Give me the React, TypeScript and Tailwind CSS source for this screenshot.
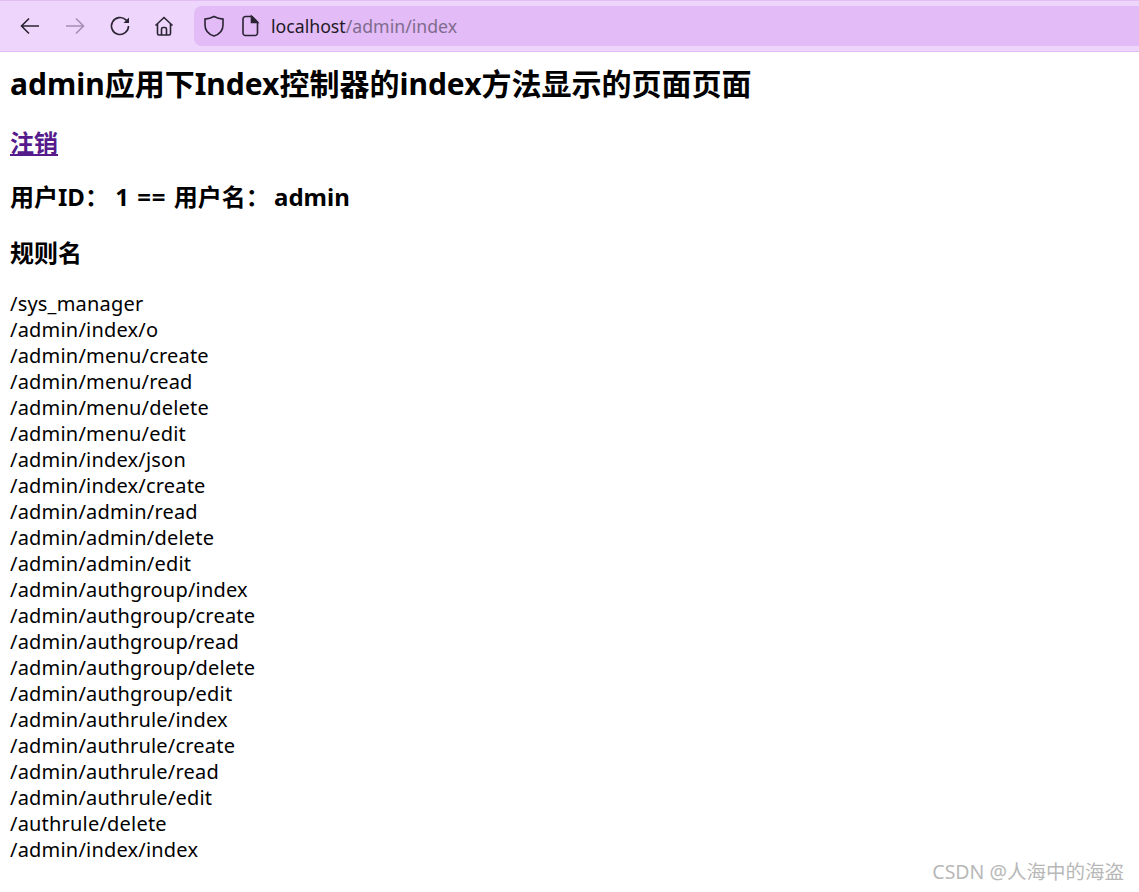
import React from "react";

const rules = [
  "/sys_manager",
  "/admin/index/o",
  "/admin/menu/create",
  "/admin/menu/read",
  "/admin/menu/delete",
  "/admin/menu/edit",
  "/admin/index/json",
  "/admin/index/create",
  "/admin/admin/read",
  "/admin/admin/delete",
  "/admin/admin/edit",
  "/admin/authgroup/index",
  "/admin/authgroup/create",
  "/admin/authgroup/read",
  "/admin/authgroup/delete",
  "/admin/authgroup/edit",
  "/admin/authrule/index",
  "/admin/authrule/create",
  "/admin/authrule/read",
  "/admin/authrule/edit",
  "/authrule/delete",
  "/admin/index/index",
];

const Icon = ({ className, children }: { className: string; children: React.ReactNode }) => (
  <svg viewBox="0 0 24 24" fill="none" stroke="currentColor" strokeWidth="1.6" className={className}>
    {children}
  </svg>
);

const App = () => {
  return (
    <div className="relative h-[892px] w-[1139px] overflow-hidden bg-white font-['Noto_Sans','Noto_Sans_CJK_SC',sans-serif] text-black">
      <div className="flex h-[52px] items-center border-t border-b border-[#e3bdf6] bg-[#eed5fb] pb-px">
        <div className="flex items-center pl-[18px] text-[#2b2433]">
          <Icon className="h-6 w-6">
            <path d="M21 12H3.500M11 4.500 3.500 12l7.500 7.500" />
          </Icon>
          <Icon className="ml-[21px] h-6 w-6 text-[#a58fb5]">
            <path d="M3 12h17.500M13 4.500l7.500 7.500-7.500 7.500" />
          </Icon>
          <Icon className="ml-[21px] h-6 w-6">
            <path d="M20.500 12a8.500 8.500 0 1 1-2.600-6.100l2.600 2.600" />
            <path d="M21 3.500V9h-5.500z" fill="currentColor" stroke="none" />
          </Icon>
          <Icon className="ml-[20px] h-6 w-6">
            <path d="M3.500 11.500 12 3.500l8.500 8M5.500 10v9.500a1.500 1.500 0 0 0 1.500 1.500h10a1.500 1.500 0 0 0 1.500-1.500V10" />
            <path d="M9.500 21v-6a1.500 1.500 0 0 1 1.500-1.500h2a1.500 1.500 0 0 1 1.500 1.500v6" />
          </Icon>
        </div>
        <div className="ml-[18px] flex h-10 flex-1 items-center rounded-l-lg bg-[#e2bbf7] pl-[8px]">
          <Icon className="h-6 w-6 text-[#2b2433]">
            <path d="M12 2.500c3 1.600 6 2.400 9 2.600v6c0 5.500-3.600 9.300-9 10.900-5.400-1.600-9-5.400-9-10.900v-6c3-.2 6-1 9-2.600z" />
          </Icon>
          <Icon className="ml-[12px] h-6 w-6 text-[#2b2433]">
            <path d="M5 5a2.500 2.500 0 0 1 2.500-2.500h6.500L19.500 8v11a2.500 2.500 0 0 1-2.500 2.500H7.500A2.500 2.500 0 0 1 5 19z" />
            <path d="M13.500 2.500V8.500h6z" fill="currentColor" />
          </Icon>
          <span className="ml-[9px] pt-[2px] text-[17.700px] leading-none text-[#1f1a26]">
            localhost<span className="text-[#7f6c8d]">/admin/index</span>
          </span>
        </div>
      </div>

      <div className="px-[10px]">
        <h1 className="mt-[12px] text-[30px] leading-[40px] font-bold">
          admin应用下Index控制器的index方法显示的页面页面
        </h1>
        <h3 className="mt-[23px] text-[24px] leading-[32px] font-bold">
          <a href="#" className="text-[#551a8b] underline">注销</a>
        </h3>
        <h3 className="mt-[22px] text-[24px] leading-[32px] font-bold">
          用户ID： 1 <span className="mr-px ml-[2px] tracking-[1px]">==</span> 用户名： <span className="-ml-[2px]">admin</span>
        </h3>
        <h3 className="mt-[24px] text-[24px] leading-[32px] font-bold">规则名</h3>
        <ul className="mt-[22px] text-[20px] leading-[26px] tracking-[0.2px]">
          {rules.map((rule) => (
            <li key={rule}>{rule}</li>
          ))}
        </ul>
      </div>

      <span className="absolute right-[15px] bottom-[8px] text-[19.500px] leading-6 text-[#b8b8b8]">
        CSDN @人海中的海盗
      </span>
    </div>
  );
};

export default App;
